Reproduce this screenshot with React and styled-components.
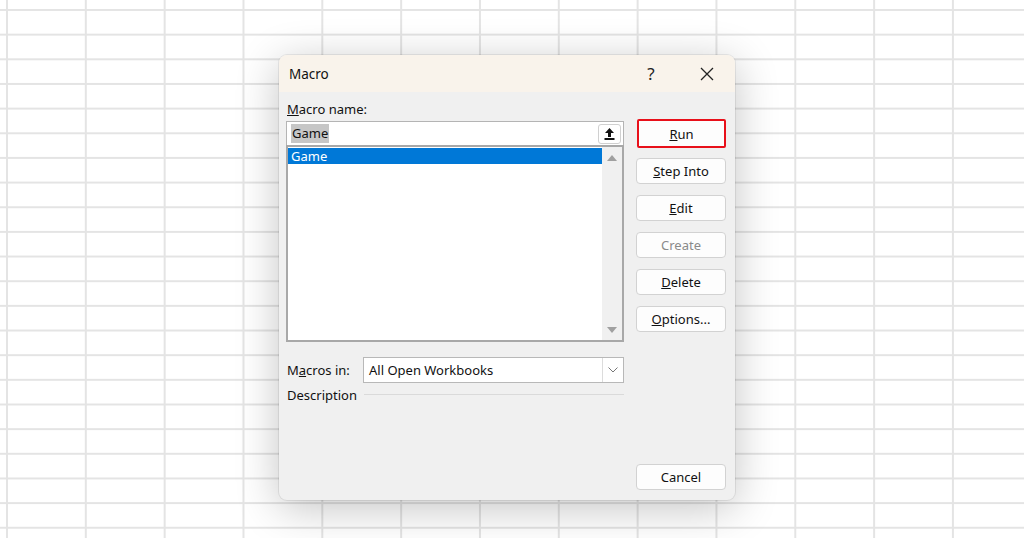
import React from "react";
import styled, { createGlobalStyle } from "styled-components";

const Global = createGlobalStyle`
  html, body { margin: 0; padding: 0; }
  body { font-family: "Noto Sans", "Open Sans", sans-serif; }
`;

const Sheet = styled.div`
  width: 1024px;
  height: 538px;
  box-sizing: border-box;
  padding: 55px 0 0 279px;
  background-color: #ffffff;
  background-image:
    linear-gradient(to right, #e4e4e4 2px, transparent 2px),
    linear-gradient(to bottom, #e4e4e4 2px, transparent 2px);
  background-size: 78.83px 24.67px;
  background-position: 6px 9px;
  overflow: hidden;
`;

const Dialog = styled.div`
  width: 456px;
  height: 445px;
  border-radius: 8px;
  background: #f0f0f0;
  box-shadow: 0 8px 44px rgba(0, 0, 0, 0.24), 0 0 0 1px rgba(0, 0, 0, 0.07);
  display: flex;
  flex-direction: column;
  overflow: hidden;
  color: #111;
  font-size: 13px;
`;

const TitleBar = styled.div`
  height: 37px;
  flex: none;
  background: #f9f3eb;
  display: flex;
  align-items: center;
  padding: 0 0 0 10px;
`;

const Title = styled.div`
  flex: 1;
  font-size: 13.5px;
  color: #111;
`;

const TitleButton = styled.div`
  width: 56px;
  height: 37px;
  display: flex;
  align-items: center;
  justify-content: center;
  font-size: 17px;
  color: #222;
`;

const Body = styled.div`
  flex: 1;
  display: grid;
  grid-template-columns: 338px 90px;
  column-gap: 12px;
  padding: 8px 0 0 7px;
`;

const LeftCol = styled.div`
  display: flex;
  flex-direction: column;
`;

const RightCol = styled.div`
  display: flex;
  flex-direction: column;
  padding-top: 20px;
  height: 390px;
  box-sizing: border-box;
`;

const Label = styled.div`
  height: 20px;
  line-height: 18px;
  padding-left: 1px;
  white-space: nowrap;
`;

const NameInput = styled.div`
  height: 24px;
  box-sizing: border-box;
  border: 1px solid #b4b4b4;
  border-bottom: none;
  background: #fff;
  display: flex;
  align-items: center;
  padding: 0 2px 0 4px;
  margin-top: 1px;
`;

const SelText = styled.span`
  background: #c6c6c6;
  color: #111;
  padding: 0 1px;
  line-height: 19px;
`;

const Spacer = styled.div`
  flex: 1;
`;

const UpButton = styled.div`
  width: 23px;
  height: 20px;
  box-sizing: border-box;
  border: 1px solid #d0d0d0;
  border-radius: 3px;
  background: #fff;
  display: flex;
  align-items: center;
  justify-content: center;
`;

const List = styled.div`
  height: 197px;
  box-sizing: border-box;
  border: 2px solid #a8a8a8;
  background: #fff;
  display: flex;
`;

const ListItems = styled.div`
  flex: 1;
  padding: 1px 0 0 0;
`;

const ListItem = styled.div`
  height: 16px;
  line-height: 16px;
  padding-left: 3px;
  background: ${(p) => (p.$active ? "#0078d7" : "transparent")};
  color: ${(p) => (p.$active ? "#ffffff" : "#111")};
`;

const ScrollBar = styled.div`
  width: 20px;
  background: #f0f0f0;
  display: flex;
  flex-direction: column;
  justify-content: space-between;
  align-items: center;
  padding: 8px 0 7px;
`;

const MacrosRow = styled.div`
  display: flex;
  align-items: center;
  margin-top: 15px;
  height: 26px;
`;

const RowLabel = styled.div`
  width: ${(p) => (p.$auto ? "auto" : "76px")};
  padding-left: 1px;
  white-space: nowrap;
`;

const Select = styled.div`
  flex: 1;
  height: 26px;
  box-sizing: border-box;
  border: 1px solid #b8b8b8;
  background: #fff;
  display: flex;
  align-items: center;
  padding-left: 5px;
`;

const SelectText = styled.div`
  flex: 1;
`;

const Chevron = styled.div`
  width: 20px;
  height: 24px;
  border-left: 1px solid #dcdcdc;
  display: flex;
  align-items: center;
  justify-content: center;
`;

const DescRow = styled.div`
  display: flex;
  align-items: center;
  margin-top: 0px;
  height: 24px;
`;

const DescLine = styled.div`
  flex: 1;
  height: 1px;
  background: #dadada;
  margin: 0 0 2px 7px;
`;

const Button = styled.div`
  height: 26px;
  box-sizing: border-box;
  border: ${(p) => (p.$highlight ? "2px solid #e8101a" : "1px solid #d2d2d2")};
  border-radius: ${(p) => (p.$highlight ? "2px" : "4px")};
  background: #fdfdfd;
  display: flex;
  align-items: center;
  justify-content: center;
  color: ${(p) => (p.$disabled ? "#8a8a8a" : "#111")};
  margin-bottom: 11px;
  ${(p) => p.$highlight && "margin-top: -1px; height: 29px; margin-bottom: 10px; margin-left: 1px;"}
  ${(p) => p.$bottom && "margin-top: auto; margin-bottom: 0;"}
`;

const Up = () => (
  <svg width="10" height="6" viewBox="0 0 10 6">
    <polygon points="5,0 10,6 0,6" fill="#a0a0a0" />
  </svg>
);
const Down = () => (
  <svg width="10" height="6" viewBox="0 0 10 6">
    <polygon points="0,0 10,0 5,6" fill="#a0a0a0" />
  </svg>
);

export default function App() {
  return (
    <>
      <Global />
      <Sheet>
        <Dialog>
          <TitleBar>
            <Title>Macro</Title>
            <TitleButton>?</TitleButton>
            <TitleButton>
              <svg width="14" height="14" viewBox="0 0 14 14">
                <path d="M1 1 L13 13 M13 1 L1 13" stroke="#222" strokeWidth="1.3" />
              </svg>
            </TitleButton>
          </TitleBar>
          <Body>
            <LeftCol>
              <Label>
                <u>M</u>acro name:
              </Label>
              <NameInput>
                <SelText>Game</SelText>
                <Spacer />
                <UpButton>
                  <svg width="11" height="13" viewBox="0 0 11 13">
                    <path d="M5.5 1 L10 6 L7 6 L7 10 L4 10 L4 6 L1 6 Z" fill="#111" />
                    <rect x="0.5" y="11" width="10" height="2" fill="#111" />
                  </svg>
                </UpButton>
              </NameInput>
              <List>
                <ListItems>
                  <ListItem $active>Game</ListItem>
                </ListItems>
                <ScrollBar>
                  <Up />
                  <Down />
                </ScrollBar>
              </List>
              <MacrosRow>
                <RowLabel>
                  M<u>a</u>cros in:
                </RowLabel>
                <Select>
                  <SelectText>All Open Workbooks</SelectText>
                  <Chevron>
                    <svg width="10" height="6" viewBox="0 0 10 6">
                      <path d="M0.5 0.5 L5 5 L9.5 0.5" stroke="#777" strokeWidth="1" fill="none" />
                    </svg>
                  </Chevron>
                </Select>
              </MacrosRow>
              <DescRow>
                <RowLabel $auto>Description</RowLabel>
                <DescLine />
              </DescRow>
            </LeftCol>
            <RightCol>
              <Button $highlight>
                <span>
                  <u>R</u>un
                </span>
              </Button>
              <Button>
                <span>
                  <u>S</u>tep Into
                </span>
              </Button>
              <Button>
                <span>
                  <u>E</u>dit
                </span>
              </Button>
              <Button $disabled>Create</Button>
              <Button>
                <span>
                  <u>D</u>elete
                </span>
              </Button>
              <Button>
                <span>
                  <u>O</u>ptions...
                </span>
              </Button>
              <Button $bottom>Cancel</Button>
            </RightCol>
          </Body>
        </Dialog>
      </Sheet>
    </>
  );
}
